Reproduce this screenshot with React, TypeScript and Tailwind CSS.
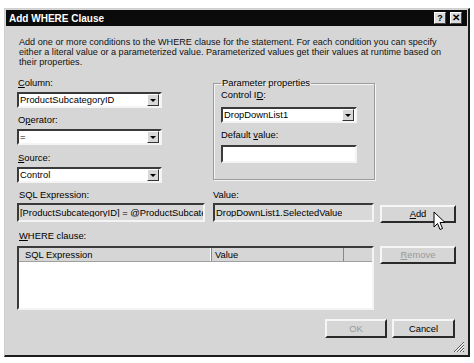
import { ReactNode } from "react";

const font = { fontFamily: '"Liberation Sans", Arial, sans-serif' };

function Key({ children }: { children: ReactNode }) {
    return <span className="underline underline-offset-1">{children}</span>;
}

function Sunken({ className, children }: { className: string; children?: ReactNode }) {
    return (
        <div
            className={
                "border-2 border-t-[#3a3a3a] border-l-[#3a3a3a] border-b-[#f4f4f4] border-r-[#f4f4f4] flex items-center " +
                className
            }
        >
            {children}
        </div>
    );
}

function Combo({ value, width }: { value: string; width: string }) {
    return (
        <Sunken className={"h-[16px] bg-white pl-[1px] " + width}>
            <span className="flex-1 min-w-0 truncate leading-none">{value}</span>
            <div className="w-[12px] h-[12px] mr-[1px] bg-[#d8d8d8] border border-t-white border-l-white border-b-[#333] border-r-[#333] flex items-center justify-center">
                <div className="w-0 h-0 border-l-[3px] border-r-[3px] border-t-[3px] border-l-transparent border-r-transparent border-t-black" />
            </div>
        </Sunken>
    );
}

function Button({ children, className, disabled }: { children: ReactNode; className: string; disabled?: boolean }) {
    return (
        <div
            className={
                "border-2 border-t-[#f6f6f6] border-l-[#f6f6f6] border-b-[#2a2a2a] border-r-[#2a2a2a] bg-[#d6d6d6] flex items-center justify-center leading-none " +
                (disabled ? "text-[#9a9a9a] " : "text-black ") +
                className
            }
        >
            {children}
        </div>
    );
}

function App() {
    return (
        <div className="w-[474px] h-[363px] bg-white pt-[8px] pl-[4px] text-[9.4px] text-black" style={font}>
            <div className="relative w-[466px] h-[349px] bg-[#d6d6d6] border-t border-l border-[#cfcfcf] border-r-2 border-b-2 border-r-[#1c1c1c] border-b-[#1c1c1c] p-px flex flex-col">
                <div className="h-[16px] bg-[#0b0b0b] flex items-center justify-between pl-[3px] pr-[5px]">
                    <span className="text-white font-bold text-[10px]">Add WHERE Clause</span>
                    <div className="flex gap-[4px]">
                        <div className="w-[12px] h-[12px] bg-[#dcdcdc] border border-t-white border-l-white border-b-[#444] border-r-[#444] flex items-center justify-center text-[9px] font-bold leading-none">?</div>
                        <div className="w-[12px] h-[12px] bg-[#dcdcdc] border border-t-white border-l-white border-b-[#444] border-r-[#444] flex items-center justify-center text-[10px] font-bold leading-none">✕</div>
                    </div>
                </div>

                <div className="pl-[11px] flex flex-col">
                    <div className="mt-[11px] ml-[2px] flex flex-col leading-[10px] text-[#111] text-[9.1px] whitespace-nowrap">
                        <span>Add one or more conditions to the WHERE clause for the statement. For each condition you can specify</span>
                        <span>either a literal value or a parameterized value. Parameterized values get their values at runtime based on</span>
                        <span>their properties.</span>
                    </div>

                    <div className="flex mt-[11px] h-[102px]">
                        <div className="w-[145px] flex flex-col">
                            <span className="leading-[10px] ml-[1px]"><Key>C</Key>olumn:</span>
                            <div className="mt-[4px]"><Combo value="ProductSubcategoryID" width="w-[145px]" /></div>
                            <span className="leading-[10px] ml-[1px] mt-[7px]">O<Key>p</Key>erator:</span>
                            <div className="mt-[4px]"><Combo value="=" width="w-[145px]" /></div>
                            <span className="leading-[10px] ml-[1px] mt-[8px]"><Key>S</Key>ource:</span>
                            <div className="mt-[4px]"><Combo value="Control" width="w-[145px]" /></div>
                        </div>

                        <fieldset className="ml-[51px] w-[162px] h-[102px] border border-[#9c9c9c] shadow-[inset_1px_1px_0_#f4f4f4,1px_1px_0_#f4f4f4] px-[7px]">
                            <legend className="leading-[10px] px-[1px]">Parameter properties</legend>
                            <div className="flex flex-col">
                                <span className="leading-[10px] mt-[2px]">Control I<Key>D</Key>:</span>
                                <div className="mt-[7px]"><Combo value="DropDownList1" width="w-[136px]" /></div>
                                <span className="leading-[10px] mt-[7px]">Default <Key>v</Key>alue:</span>
                                <Sunken className="mt-[5px] w-[136px] h-[18px] bg-white" />
                            </div>
                        </fieldset>
                    </div>

                    <div className="flex mt-[10px]">
                        <div className="w-[188px] flex flex-col">
                            <span className="leading-[10px] ml-[2px]">SQL Expression:</span>
                            <Sunken className="mt-[3px] w-[188px] h-[19px] bg-[#d9d9d9] pl-[1px] overflow-hidden">
                                <span className="flex-1 min-w-0 whitespace-nowrap overflow-hidden leading-none">[ProductSubcategoryID] = @ProductSubcate</span>
                            </Sunken>
                        </div>
                        <div className="ml-[8px] w-[161px] flex flex-col">
                            <span className="leading-[10px]">Value:</span>
                            <Sunken className="mt-[3px] w-[161px] h-[19px] bg-[#d9d9d9] pl-[1px]">
                                <span className="whitespace-nowrap overflow-hidden leading-none">DropDownList1.SelectedValue</span>
                            </Sunken>
                        </div>
                        <Button className="ml-[6px] mt-[15px] w-[76px] h-[18px]">
                            <span><Key>A</Key>dd</span>
                        </Button>
                    </div>

                    <span className="leading-[10px] ml-[2px] mt-[8px]"><Key>W</Key>HERE clause:</span>

                    <div className="flex mt-[5px]">
                        <Sunken className="w-[357px] h-[64px] bg-white !items-stretch flex-col">
                            <div className="h-[14px] bg-[#d6d6d6] flex leading-none border-b border-[#a0a0a0]">
                                <div className="w-[193px] border-r border-[#888] shadow-[inset_-1px_0_0_#fff] pl-[6px] flex items-center">SQL Expression</div>
                                <div className="w-[132px] border-r border-[#888] pl-[3px] flex items-center">Value</div>
                                <div className="flex-1" />
                            </div>
                        </Sunken>
                        <Button disabled className="ml-[6px] w-[76px] h-[18px]">
                            <span><Key>R</Key>emove</span>
                        </Button>
                    </div>

                    <div className="flex mt-[9px] ml-[308px] gap-[5px]">
                        <Button disabled className="w-[62px] h-[19px]">OK</Button>
                        <Button className="w-[63px] h-[19px]">Cancel</Button>
                    </div>
                </div>

                <svg className="absolute right-[3px] bottom-[2px]" width="12" height="12" viewBox="0 0 12 12">
                    <path d="M11 1 L1 11 M11 4 L4 11 M11 7 L7 11 M11 10 L10 11" stroke="#555" strokeWidth="1" />
                    <path d="M11 2 L2 11 M11 5 L5 11 M11 8 L8 11" stroke="#fff" strokeWidth="1" />
                </svg>

                <svg className="absolute left-[428px] top-[202px]" width="14" height="20" viewBox="0 0 14 20">
                    <path d="M1 1 L1 16 L4.5 12.5 L7 18.5 L9.5 17.5 L7 11.5 L12 11.5 Z" fill="#fff" stroke="#000" strokeWidth="1" strokeLinejoin="miter" />
                </svg>
            </div>
        </div>
    );
}

export default App;
